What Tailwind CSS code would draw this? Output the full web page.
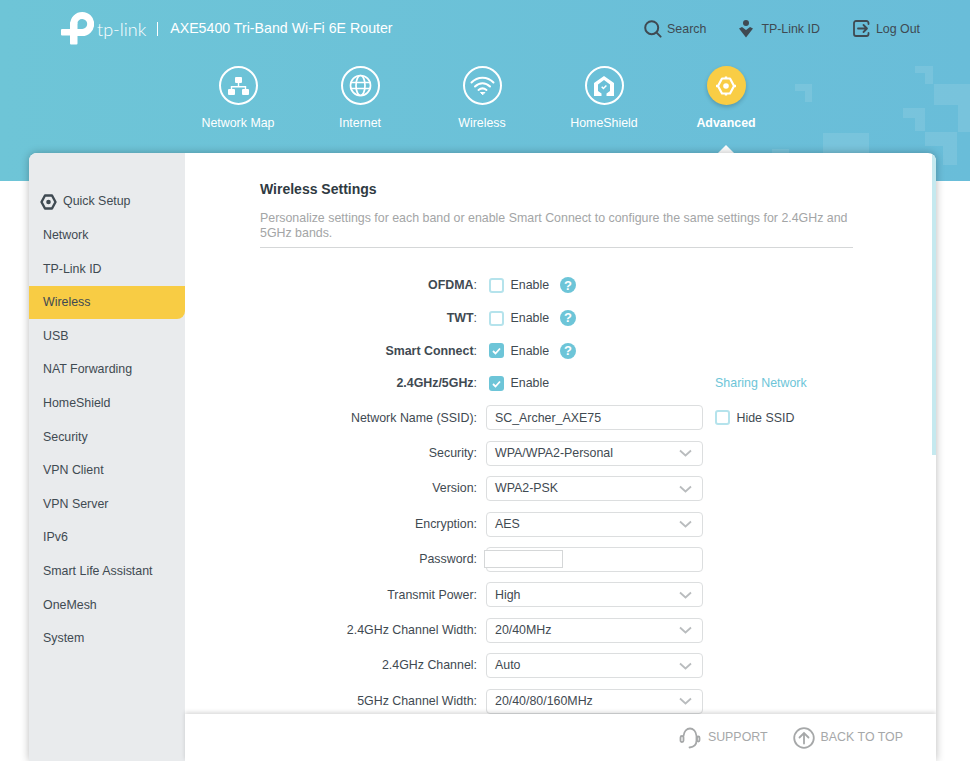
<!DOCTYPE html>
<html lang="en">
  <head>
    <meta charset="UTF-8" />
    <meta name="viewport" content="width=device-width,initial-scale=1.0" />
    <title>Wireless Settings</title>
    <script src="https://cdn.jsdelivr.net/npm/@tailwindcss/browser@4"></script>
  </head>
  <body class="h-[761px] w-[970px] overflow-hidden bg-white font-['Liberation_Sans',Arial,sans-serif] text-[12.4px] text-[#3f4a52]">
    <!-- Header -->
    <header class="relative h-[181px] bg-linear-to-r from-[#6ec5d7] to-[#69bdd9]">
      <!-- Background pixel pattern -->
      <svg class="absolute left-0 top-0" width="970" height="181" fill="#fff" fill-opacity="0.1">
        <path d="M915 66h18v18h-8v-11h-10z" />
        <path d="M934 84h36v48h-12v-27h-24z" />
        <path d="M903 108h22v23h-10v-13h-12z" />
        <path d="M925 132h32v33h-14v-19h-18z" />
        <path d="M795 84h17v18h-7v-11h-10z" />
        <path d="M772 149h17v12h-7v-5h-10z" />
        <rect x="823" y="133" width="46" height="30" />
      </svg>

      <div class="relative flex h-[58px] items-center pl-[61px] pr-[50px]">
        <svg width="33" height="33" viewBox="0 0 33 33" class="mt-[-1px]">
          <rect x="0" y="17" width="17" height="6.5" rx="1" fill="#fff" />
          <rect x="9" y="10" width="7.5" height="22.5" rx="1" fill="#fff" />
          <path d="M12.7 12A8.5 8.5 0 1 1 21 20.5H16" fill="none" stroke="#fff" stroke-width="7" />
        </svg>
        <span class="ml-[3px] font-['Lato',sans-serif] text-[18px] font-light text-white">tp-link</span>
        <span class="ml-[11px] h-[14px] w-px bg-white"></span>
        <span class="ml-[12px] text-[14.2px] text-white">AXE5400 Tri-Band Wi-Fi 6E Router</span>
        <div class="ml-auto flex items-center">
          <svg width="18" height="18" viewBox="0 0 18 18" fill="none" stroke="#3f4a52" stroke-width="2" stroke-linecap="round">
            <circle cx="7.7" cy="7.7" r="6.5" />
            <path d="M12.6 12.6l4 4" />
          </svg>
          <span class="ml-[5px]">Search</span>
          <svg width="16" height="18" viewBox="0 0 16 18" fill="#3f4a52" class="ml-[32px]">
            <circle cx="8" cy="3" r="3" />
            <path d="M1 8.500l3-1.500 4 3 4-3 3 1.500-7 9z" />
          </svg>
          <span class="ml-[7px]">TP-Link ID</span>
          <svg width="17" height="17" viewBox="0 0 17 17" fill="none" stroke="#3f4a52" stroke-width="1.8" stroke-linecap="round" stroke-linejoin="round" class="ml-[33px]">
            <path d="M15.500 4V3a2 2 0 0 0-2-2H3a2 2 0 0 0-2 2v11a2 2 0 0 0 2 2h10.500a2 2 0 0 0 2-2v-1" />
            <path d="M5 8.500h9M10.500 5l3.500 3.500-3.500 3.500" />
          </svg>
          <span class="ml-[6px]">Log Out</span>
        </div>
      </div>

      <!-- Main tabs -->
      <nav class="relative mt-[8px] flex pl-[177px] text-white">
        <div class="flex w-[122px] flex-col items-center">
          <span class="flex h-[39px] w-[39px] items-center justify-center rounded-full border-2 border-white">
            <svg width="23" height="20" viewBox="0 0 23 20" fill="#fff">
              <rect x="8" y="1" width="7" height="6" rx="1" />
              <rect x="1" y="13" width="7" height="6" rx="1" />
              <rect x="15" y="13" width="7" height="6" rx="1" />
              <path d="M10.800 7h1.400v3h7v3h-1.400v-1.600H5.200V13H3.800v-3h7z" />
            </svg>
          </span>
          <span class="mt-[11px] leading-[15px]">Network Map</span>
        </div>
        <div class="flex w-[122px] flex-col items-center">
          <span class="flex h-[39px] w-[39px] items-center justify-center rounded-full border-2 border-white">
            <svg width="23" height="23" viewBox="0 0 23 23" fill="none" stroke="#fff" stroke-width="1.700">
              <circle cx="11.500" cy="11.500" r="10" />
              <ellipse cx="11.500" cy="11.500" rx="4.500" ry="10" />
              <path d="M1.500 8.500h20M1.500 14.500h20" />
            </svg>
          </span>
          <span class="mt-[11px] leading-[15px]">Internet</span>
        </div>
        <div class="flex w-[122px] flex-col items-center">
          <span class="flex h-[39px] w-[39px] items-center justify-center rounded-full border-2 border-white">
            <svg width="25" height="21" viewBox="0 0 25 21" fill="none" stroke="#fff" stroke-width="2" stroke-linecap="round">
              <path d="M1.500 7.500C7.500 1 17.500 1 23.500 7.500" />
              <path d="M5 11.500C9.500 7 15.500 7 20 11.500" />
              <path d="M8.500 15C11 13 14 13 16.500 15" />
              <path d="M12.500 19.500l-2-2h4z" fill="#fff" stroke-width="1" />
            </svg>
          </span>
          <span class="mt-[11px] leading-[15px]">Wireless</span>
        </div>
        <div class="flex w-[122px] flex-col items-center">
          <span class="flex h-[39px] w-[39px] items-center justify-center rounded-full border-2 border-white">
            <svg width="22" height="22" viewBox="0 0 22 22">
              <path d="M11 1L21 8v13h-7.500v-2.500L17 16V9.500L11 5 5 9.500V16l3.500 2.500V21H1V8z" fill="#fff" />
              <path d="M8.700 11.800l1.700 1.700 3-3" fill="none" stroke="#fff" stroke-width="1.500" />
            </svg>
          </span>
          <span class="mt-[11px] leading-[15px]">HomeShield</span>
        </div>
        <div class="relative flex w-[122px] flex-col items-center">
          <span class="flex h-[39px] w-[39px] items-center justify-center rounded-full bg-[#f9cd45] shadow-[0_2px_4px_rgba(0,0,0,0.2)]">
            <svg width="22" height="22" viewBox="0 0 22 22" fill="#fff">
              <path d="M7 3.500h8L19 11l-4 7.500H7L3 11z" fill="none" stroke="#fff" stroke-width="2.200" stroke-linejoin="round" />
              <circle cx="11" cy="11" r="2.800" />
              <rect x="9.800" y="1.500" width="2.400" height="2" />
              <rect x="9.800" y="18.500" width="2.400" height="2" />
              <rect x="1" y="9.800" width="2.500" height="2.400" />
              <rect x="18.500" y="9.800" width="2.500" height="2.400" />
            </svg>
          </span>
          <span class="mt-[11px] font-bold leading-[15px]">Advanced</span>
          <span class="absolute left-[52px] top-[79px] h-0 w-0 border-x-[9px] border-b-[9px] border-x-transparent border-b-white"></span>
        </div>
      </nav>
    </header>

    <!-- Card -->
    <div class="relative z-10 ml-[29px] mr-[34px] mt-[-28px] flex h-[608px] overflow-hidden rounded-t-[8px] bg-white shadow-[0_0_8px_rgba(0,0,0,0.28)]">
      <!-- Sidebar -->
      <aside class="w-[156px] shrink-0 bg-[#e9ebed] pt-[32px]">
        <div class="flex h-[33.600px] items-center pl-[11px]">
          <svg width="17" height="16" viewBox="0 0 17 16" fill="none" class="mr-[6px]">
            <path d="M5 1.500h7L15.500 8 12 14.500H5L1.500 8z" stroke="#3f4a52" stroke-width="2.400" stroke-linejoin="round" />
            <circle cx="8.500" cy="8" r="2.300" fill="#3f4a52" />
          </svg>
          Quick Setup
        </div>
        <div class="flex h-[33.600px] items-center pl-[14px]">Network</div>
        <div class="flex h-[33.600px] items-center pl-[14px]">TP-Link ID</div>
        <div class="flex h-[33.600px] items-center rounded-br-[8px] bg-[#f8cc44] pl-[14px]">Wireless</div>
        <div class="flex h-[33.600px] items-center pl-[14px]">USB</div>
        <div class="flex h-[33.600px] items-center pl-[14px]">NAT Forwarding</div>
        <div class="flex h-[33.600px] items-center pl-[14px]">HomeShield</div>
        <div class="flex h-[33.600px] items-center pl-[14px]">Security</div>
        <div class="flex h-[33.600px] items-center pl-[14px]">VPN Client</div>
        <div class="flex h-[33.600px] items-center pl-[14px]">VPN Server</div>
        <div class="flex h-[33.600px] items-center pl-[14px]">IPv6</div>
        <div class="flex h-[33.600px] items-center pl-[14px]">Smart Life Assistant</div>
        <div class="flex h-[33.600px] items-center pl-[14px]">OneMesh</div>
        <div class="flex h-[33.600px] items-center pl-[14px]">System</div>
      </aside>

      <!-- Content -->
      <div class="flex min-w-0 flex-1 flex-col">
        <main class="h-[561px] overflow-hidden pl-[75px] pr-[83px] pt-[28px]">
          <h2 class="text-[14px] font-bold leading-[17px] text-[#2f3a42]">Wireless Settings</h2>
          <p class="mt-[13px] border-b border-[#d5d7d8] pb-[7px] leading-[14.500px] text-[#a3a5a6]">Personalize settings for each band or enable Smart Connect to configure the same settings for 2.4GHz and 5GHz bands.</p>

          <div class="mt-[21px]">
            <div class="flex h-[32.800px] items-center">
              <span class="w-[217px] text-right"><b>OFDMA</b>:</span>
              <span class="ml-[12px] h-[15px] w-[15px] rounded-[3px] border-2 border-[#b5e3ec]"></span>
              <span class="ml-[6.500px]">Enable</span>
              <span class="ml-[11px] flex h-[16px] w-[16px] items-center justify-center rounded-full bg-[#6dc5d8] text-[13px] font-bold text-white">?</span>
            </div>
            <div class="flex h-[32.800px] items-center">
              <span class="w-[217px] text-right"><b>TWT</b>:</span>
              <span class="ml-[12px] h-[15px] w-[15px] rounded-[3px] border-2 border-[#b5e3ec]"></span>
              <span class="ml-[6.500px]">Enable</span>
              <span class="ml-[11px] flex h-[16px] w-[16px] items-center justify-center rounded-full bg-[#6dc5d8] text-[13px] font-bold text-white">?</span>
            </div>
            <div class="flex h-[32.800px] items-center">
              <span class="w-[217px] text-right"><b>Smart Connect</b>:</span>
              <span class="ml-[12px] flex h-[15px] w-[15px] items-center justify-center rounded-[3px] bg-[#6dc5d8]">
                <svg width="9" height="8" viewBox="0 0 9 8" fill="none" stroke="#fff" stroke-width="1.800"><path d="M1 4l2.500 2.500L8 1.500" /></svg>
              </span>
              <span class="ml-[6.500px]">Enable</span>
              <span class="ml-[11px] flex h-[16px] w-[16px] items-center justify-center rounded-full bg-[#6dc5d8] text-[13px] font-bold text-white">?</span>
            </div>
            <div class="flex h-[32.800px] items-center">
              <span class="w-[217px] text-right"><b>2.4GHz/5GHz</b>:</span>
              <span class="ml-[12px] flex h-[15px] w-[15px] items-center justify-center rounded-[3px] bg-[#6dc5d8]">
                <svg width="9" height="8" viewBox="0 0 9 8" fill="none" stroke="#fff" stroke-width="1.800"><path d="M1 4l2.500 2.500L8 1.500" /></svg>
              </span>
              <span class="ml-[6.500px]">Enable</span>
              <span class="ml-[166px] text-[#6dc5d8]">Sharing Network</span>
            </div>

            <div class="flex h-[35.400px] items-center">
              <span class="w-[217px] text-right">Network Name (SSID):</span>
              <span class="ml-[9px] flex h-[25px] w-[217px] items-center rounded-[4px] border border-[#dcdedf] pl-[8px]">SC_Archer_AXE75</span>
              <span class="ml-[12px] h-[15px] w-[15px] rounded-[3px] border-2 border-[#b5e3ec]"></span>
              <span class="ml-[6.500px]">Hide SSID</span>
            </div>
            <div class="flex h-[35.400px] items-center">
              <span class="w-[217px] text-right">Security:</span>
              <span class="ml-[9px] flex h-[25px] w-[217px] items-center justify-between rounded-[4px] border border-[#dcdedf] pl-[8px] pr-[10px]">WPA/WPA2-Personal
                <svg width="13" height="8" viewBox="0 0 13 8" fill="none" stroke="#b9bcbe" stroke-width="1.800"><path d="M1 1.500l5.500 5 5.500-5" /></svg>
              </span>
            </div>
            <div class="flex h-[35.400px] items-center">
              <span class="w-[217px] text-right">Version:</span>
              <span class="ml-[9px] flex h-[25px] w-[217px] items-center justify-between rounded-[4px] border border-[#dcdedf] pl-[8px] pr-[10px]">WPA2-PSK
                <svg width="13" height="8" viewBox="0 0 13 8" fill="none" stroke="#b9bcbe" stroke-width="1.800"><path d="M1 1.500l5.500 5 5.500-5" /></svg>
              </span>
            </div>
            <div class="flex h-[35.400px] items-center">
              <span class="w-[217px] text-right">Encryption:</span>
              <span class="ml-[9px] flex h-[25px] w-[217px] items-center justify-between rounded-[4px] border border-[#dcdedf] pl-[8px] pr-[10px]">AES
                <svg width="13" height="8" viewBox="0 0 13 8" fill="none" stroke="#b9bcbe" stroke-width="1.800"><path d="M1 1.500l5.500 5 5.500-5" /></svg>
              </span>
            </div>
            <div class="flex h-[35.400px] items-center">
              <span class="w-[217px] text-right">Password:</span>
              <span class="relative ml-[9px] h-[25px] w-[217px] rounded-[4px] border border-[#dcdedf]">
                <span class="absolute left-[-3px] top-[2px] h-[18px] w-[79px] border border-[#d5d7d8] bg-white"></span>
              </span>
            </div>
            <div class="flex h-[35.400px] items-center">
              <span class="w-[217px] text-right">Transmit Power:</span>
              <span class="ml-[9px] flex h-[25px] w-[217px] items-center justify-between rounded-[4px] border border-[#dcdedf] pl-[8px] pr-[10px]">High
                <svg width="13" height="8" viewBox="0 0 13 8" fill="none" stroke="#b9bcbe" stroke-width="1.800"><path d="M1 1.500l5.500 5 5.500-5" /></svg>
              </span>
            </div>
            <div class="flex h-[35.400px] items-center">
              <span class="w-[217px] text-right">2.4GHz Channel Width:</span>
              <span class="ml-[9px] flex h-[25px] w-[217px] items-center justify-between rounded-[4px] border border-[#dcdedf] pl-[8px] pr-[10px]">20/40MHz
                <svg width="13" height="8" viewBox="0 0 13 8" fill="none" stroke="#b9bcbe" stroke-width="1.800"><path d="M1 1.500l5.500 5 5.500-5" /></svg>
              </span>
            </div>
            <div class="flex h-[35.400px] items-center">
              <span class="w-[217px] text-right">2.4GHz Channel:</span>
              <span class="ml-[9px] flex h-[25px] w-[217px] items-center justify-between rounded-[4px] border border-[#dcdedf] pl-[8px] pr-[10px]">Auto
                <svg width="13" height="8" viewBox="0 0 13 8" fill="none" stroke="#b9bcbe" stroke-width="1.800"><path d="M1 1.500l5.500 5 5.500-5" /></svg>
              </span>
            </div>
            <div class="flex h-[35.400px] items-center">
              <span class="w-[217px] text-right">5GHz Channel Width:</span>
              <span class="ml-[9px] flex h-[25px] w-[217px] items-center justify-between rounded-[4px] border border-[#dcdedf] pl-[8px] pr-[10px]">20/40/80/160MHz
                <svg width="13" height="8" viewBox="0 0 13 8" fill="none" stroke="#b9bcbe" stroke-width="1.800"><path d="M1 1.500l5.500 5 5.500-5" /></svg>
              </span>
            </div>
          </div>
        </main>

        <!-- Footer -->
        <footer class="relative flex h-[47px] items-center justify-end bg-white pr-[33px] text-[#a6a8a9] shadow-[0_-2px_4px_rgba(0,0,0,0.14)]">
          <svg width="22" height="22" viewBox="0 0 22 22" fill="none" stroke="#a6a8a9" stroke-width="1.800" stroke-linecap="round">
            <path d="M4.500 9C5 4 8 1.500 11 1.500S17 4 17.500 9v4.500c0 4-3 6.500-7 7" />
            <rect x="1.500" y="9" width="3" height="6" rx="1.500" />
            <rect x="18" y="9.500" width="2.500" height="5" rx="1.200" />
          </svg>
          <span class="ml-[7px]">SUPPORT</span>
          <svg width="22" height="22" viewBox="0 0 22 22" fill="none" stroke="#a6a8a9" stroke-width="1.800" stroke-linecap="round" class="ml-[25px]">
            <circle cx="11" cy="11" r="9.800" />
            <path d="M11 16.500V6M6.500 10.500L11 6l4.500 4.500" />
          </svg>
          <span class="ml-[6px]">BACK TO TOP</span>
        </footer>
      </div>

      <!-- Scrollbar thumb -->
      <span class="absolute right-0 top-0 h-[302px] w-[4px] bg-[#c5e9ef]"></span>
    </div>
  </body>
</html>
